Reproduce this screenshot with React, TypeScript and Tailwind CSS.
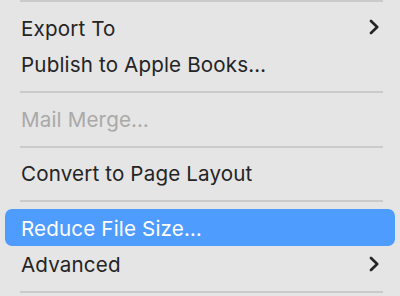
import { ReactNode } from "react";

const font = { fontFamily: "Inter, 'Noto Sans', sans-serif" };

function Chevron() {
  return (
    <svg width="10" height="16" viewBox="0 0 10 16" fill="none" className="shrink-0">
      <polyline
        points="2,2 8.2,8 2,14"
        stroke="#242424"
        strokeWidth="2.6"
        strokeLinecap="round"
        strokeLinejoin="round"
      />
    </svg>
  );
}

function Separator({ top = false }: { top?: boolean }) {
  return (
    <div className={top ? "pb-[7px]" : "pt-[9px] pb-[7px]"}>
      <div className="h-[2px] ml-[20px] mr-[17px] bg-[#cbcbcb]" />
    </div>
  );
}

function Item({
  label,
  submenu,
  disabled,
  active,
}: {
  label: ReactNode;
  submenu?: boolean;
  disabled?: boolean;
  active?: boolean;
}) {
  const color = active ? "text-white" : disabled ? "text-[#a9a9a9]" : "text-[#242424]";
  return (
    <div
      className={`mx-[5px] h-[36.5px] px-[16px] flex items-center justify-between rounded-[7px] ${
        active ? "bg-[#4f9cff]" : ""
      }`}
    >
      <span className={`pt-1 leading-normal text-[20.6px] tracking-[0.15px] ${color}`}>{label}</span>
      {submenu && <Chevron />}
    </div>
  );
}

export default function App() {
  return (
    <div className="w-[400px] h-[296px] overflow-hidden bg-[#e5e5e5]" style={font}>
      <Separator top />
      <Item label="Export To" submenu />
      <Item label="Publish to Apple Books…" />
      <Separator />
      <Item label="Mail Merge…" disabled />
      <Separator />
      <Item label="Convert to Page Layout" />
      <Separator />
      <Item label="Reduce File Size…" active />
      <Item label="Advanced" submenu />
      <Separator />
    </div>
  );
}
